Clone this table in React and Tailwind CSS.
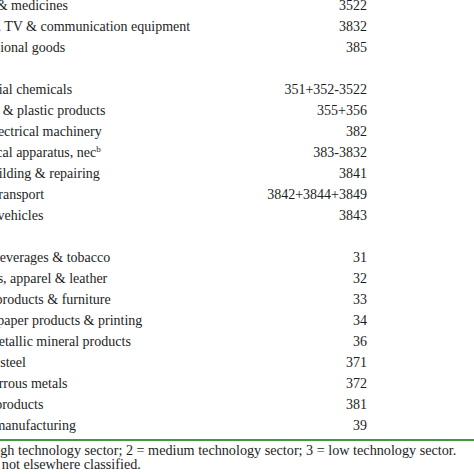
import React from "react";

const rows = [
  ["Drugs & medicines", "3522"],
  ["Radio, TV & communication equipment", "3832", null, "-ml-[36px]"],
  ["Professional goods", "385"],
  null,
  ["Industrial chemicals", "351+352-3522"],
  ["Rubber & plastic products", "355+356", null, "-ml-[42px]"],
  ["Non-electrical machinery", "382"],
  ["Electrical apparatus, nec", "383-3832", "b"],
  ["Shipbuilding & repairing", "3841"],
  ["Other transport", "3842+3844+3849"],
  ["Motor vehicles", "3843"],
  null,
  ["Food, beverages & tobacco", "31", null, "-ml-[43px]"],
  ["Textiles, apparel & leather", "32"],
  ["Wood products & furniture", "33"],
  ["Paper, paper products & printing", "34"],
  ["Non-metallic mineral products", "36"],
  ["Iron & steel", "371"],
  ["Non-ferrous metals", "372"],
  ["Metal products", "381"],
  ["Other manufacturing", "39"],
];

export default function App() {
  return (
    <div
      className="w-[474px] h-[474px] overflow-hidden bg-white text-[#1e1e1e] text-[14px]"
      style={{ fontFamily: '"Liberation Serif", "Times New Roman", serif' }}
    >
      <div className="-mt-[5px]">
        {rows.map((r, i) =>
          r ? (
            <div key={i} className="flex w-[367px] h-[21px] leading-[21px]">
              <span className={`${r[3] || "-ml-[41px]"} whitespace-nowrap`}>
                {r[0]}
                {r[2] && <sup className="text-[9px] -top-[5px]">{r[2]}</sup>}
              </span>
              <span className="ml-auto whitespace-nowrap">{r[1]}</span>
            </div>
          ) : (
            <div key={i} className="h-[21px]"></div>
          )
        )}
      </div>
      <div className="mt-[3px] border-t-2 border-[#3d9a3d]"></div>
      <div className="mt-[2px] leading-[14px] text-[14.2px] whitespace-nowrap">
        <div className="-ml-[33px]">1 = high technology sector; 2 = medium technology sector; 3 = low technology sector.</div>
        <div className="-ml-[33px]">nec = not elsewhere classified.</div>
      </div>
    </div>
  );
}
